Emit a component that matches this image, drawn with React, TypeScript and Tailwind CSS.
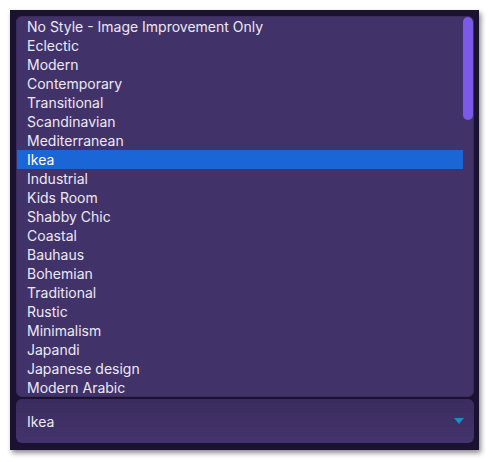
import React from 'react';

const styles = [
  'No Style - Image Improvement Only',
  'Eclectic',
  'Modern',
  'Contemporary',
  'Transitional',
  'Scandinavian',
  'Mediterranean',
  'Ikea',
  'Industrial',
  'Kids Room',
  'Shabby Chic',
  'Coastal',
  'Bauhaus',
  'Bohemian',
  'Traditional',
  'Rustic',
  'Minimalism',
  'Japandi',
  'Japanese design',
  'Modern Arabic',
];

export default function App() {
  const selected = 'Ikea';

  return (
    <div className="w-[494px] h-[462px] bg-white p-[10px] pr-[15px] pb-[12px]" style={{ fontFamily: 'Inter, "Noto Sans", sans-serif' }}>
      <div className="h-[440px] bg-[#1a1230] p-[6px] pr-[5px] shadow-[2px_3px_5px_rgba(0,0,0,0.45)] flex flex-col gap-[2px]">
        <div className="relative h-[381px] rounded-md bg-[#42326a] border border-[#3a2d5c] overflow-hidden">
          <ul className="pr-[10px]">
            {styles.map(s => (
              <li
                key={s}
                className={`h-[19px] leading-[19px] pl-[10px] text-[14px] text-[#ece9f4] ${s === selected ? 'bg-[#1b66d6] text-white' : ''}`}
              >
                {s}
              </li>
            ))}
          </ul>
          <div className="absolute right-0 top-0 w-[10px] h-[103px] rounded-full bg-[#7a5ae6]" />
        </div>
        <div className="h-[44px] rounded-md bg-gradient-to-b from-[#3b2c5e] to-[#43336c] flex items-center justify-between pl-[11px] pr-[10px]">
          <span className="text-[14px] text-[#ece9f4]">Ikea</span>
          <svg width="10" height="6" viewBox="0 0 10 6">
            <path d="M0 0 L10 0 L5 6 Z" fill="#1a8cc8" />
          </svg>
        </div>
      </div>
    </div>
  );
}
